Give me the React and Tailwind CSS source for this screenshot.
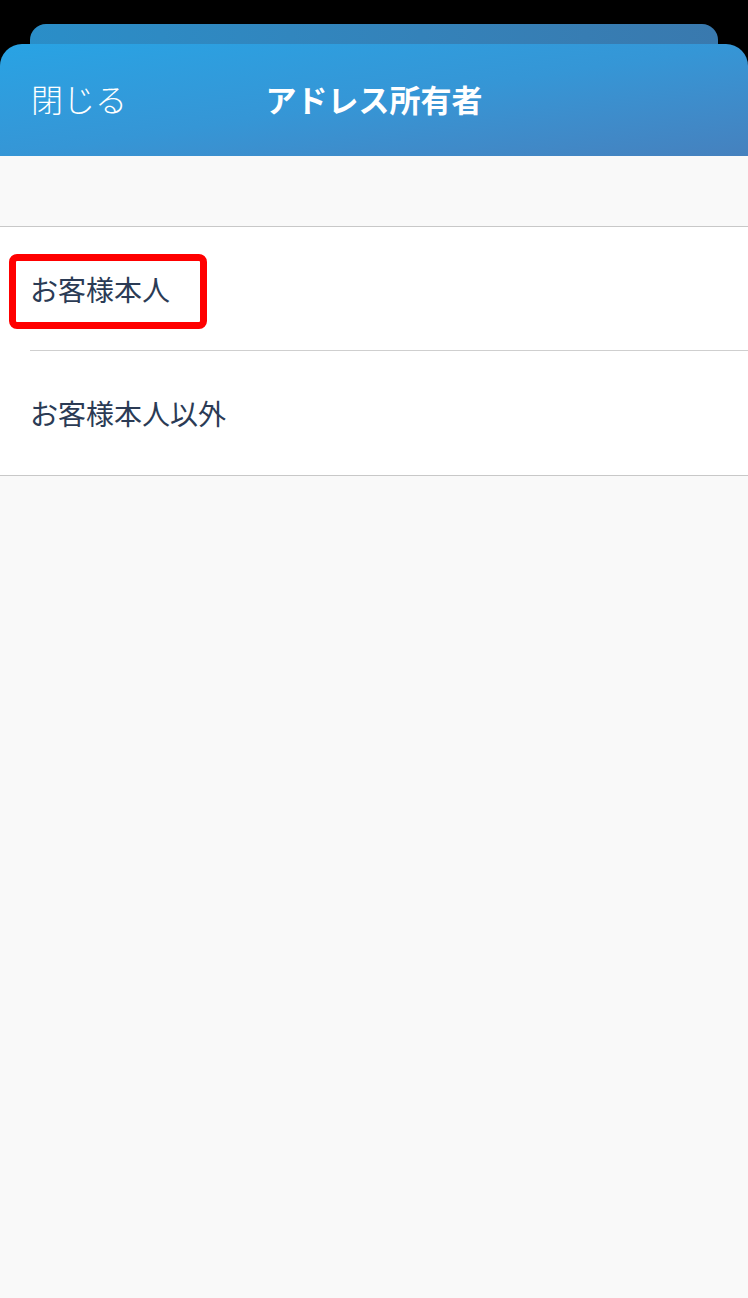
import React from 'react';

const jp = { fontFamily: '"Noto Sans CJK JP", "Noto Sans", sans-serif' };

const options = [
    { id: 'self', label: 'お客様本人', highlighted: true },
    { id: 'other', label: 'お客様本人以外' },
];

export default function App() {
    return (
        <div className="min-h-[1298px] w-full bg-[#f9f9f9]" style={jp}>
            {/* stacked sheet behind the modal */}
            <div className="bg-black px-[30px] pt-[24px]">
                <div className="h-[20px] rounded-t-[16px] bg-gradient-to-r from-[#2a8ec8] to-[#3979ae]" />
            </div>

            <div className="bg-black">
                <header className="relative flex h-[112px] items-center rounded-t-[22px] bg-gradient-to-br from-[#28a3e4] via-[#3596d6] to-[#4581be] px-[31px] pb-[4px]">
                    <button className="text-[32px] font-light leading-none text-white">閉じる</button>
                    <h1 className="absolute left-1/2 -translate-x-1/2 text-[31px] font-bold leading-none text-white">
                        アドレス所有者
                    </h1>
                </header>
            </div>

            <div className="h-[70px]" />

            <ul className="border-y border-[#c8c8c8] bg-white">
                {options.map((opt, i) => (
                    <li key={opt.id} className="pl-[30px]">
                        <div
                            className={
                                'flex h-[124px] items-center ' +
                                (i < options.length - 1 ? 'border-b border-[#cfcfcf]' : '')
                            }
                        >
                            <span className="relative text-[28px] leading-none text-[#2b3b55]">
                                {opt.label}
                                {opt.highlighted && (
                                    <span className="pointer-events-none absolute -left-[21px] -right-[37px] -top-[21px] -bottom-[26px] rounded-[8px] border-[7px] border-[#ff0000]" />
                                )}
                            </span>
                        </div>
                    </li>
                ))}
            </ul>
        </div>
    );
}
